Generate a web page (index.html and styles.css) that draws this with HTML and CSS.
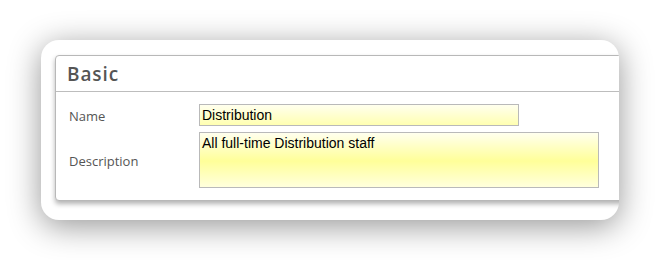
FILE: index.html
```html
<!DOCTYPE html>
<html>
<head>
<meta charset="utf-8">
<link rel="stylesheet" href="styles.css">
</head>
<body>
<div class="card">
  <div class="panel">
    <div class="panel-head">Basic</div>
    <div class="panel-body">
      <div class="row">
        <label class="lbl">Name</label>
        <div class="field input">Distribution</div>
      </div>
      <div class="row">
        <label class="lbl">Description</label>
        <div class="field textarea">All full-time Distribution staff</div>
      </div>
    </div>
  </div>
</div>
</body>
</html>
```
FILE: styles.css
```css
html, body {
  margin: 0;
  padding: 0;
  background: #fff;
}
body {
  padding: 40px 0 0 41px;
  min-height: 260px;
  box-sizing: border-box;
}
.card {
  width: 578px;
  height: 180px;
  box-sizing: border-box;
  background: #fff;
  border-radius: 18px;
  box-shadow: 0 6px 32px rgba(0,0,0,0.42);
  overflow: hidden;
  padding: 15px 0 0 14px;
}
.panel {
  width: 620px;
  height: 146px;
  box-sizing: border-box;
  border: 1px solid #b8b8b8;
  border-radius: 4px;
  background: #fff;
  box-shadow: 0 3px 5px rgba(0,0,0,0.3);
}
.panel-head {
  height: 36px;
  box-sizing: border-box;
  border-bottom: 1px solid #bdbdbd;
  padding: 5px 0 0 11px;
  font-family: "Open Sans", sans-serif;
  font-size: 19px;
  font-weight: 600;
  letter-spacing: 0.9px;
  color: #555;
  line-height: 26px;
}
.panel-body {
  padding: 12px 0 0 13px;
  display: flex;
  flex-direction: column;
  gap: 6px;
}
.row {
  display: flex;
  align-items: center;
}
.lbl {
  width: 130px;
  padding-top: 2px;
  font-family: "Open Sans", sans-serif;
  font-size: 13px;
  color: #555;
}
.field {
  box-sizing: border-box;
  border: 1px solid #b9b9b9;
  background: #ffffe8 linear-gradient(#ffffee 0, #ffff99 28px, #ffffe2 56px) no-repeat;
  background-size: 100% 56px;
  font-family: "Liberation Sans", Arial, sans-serif;
  font-size: 14px;
  color: #000;
  padding: 2px 2px;
}
.input {
  width: 320px;
  height: 22px;
  line-height: 16px;
}
.textarea {
  width: 400px;
  height: 56px;
  line-height: 16px;
  padding-top: 2px;
}
```
